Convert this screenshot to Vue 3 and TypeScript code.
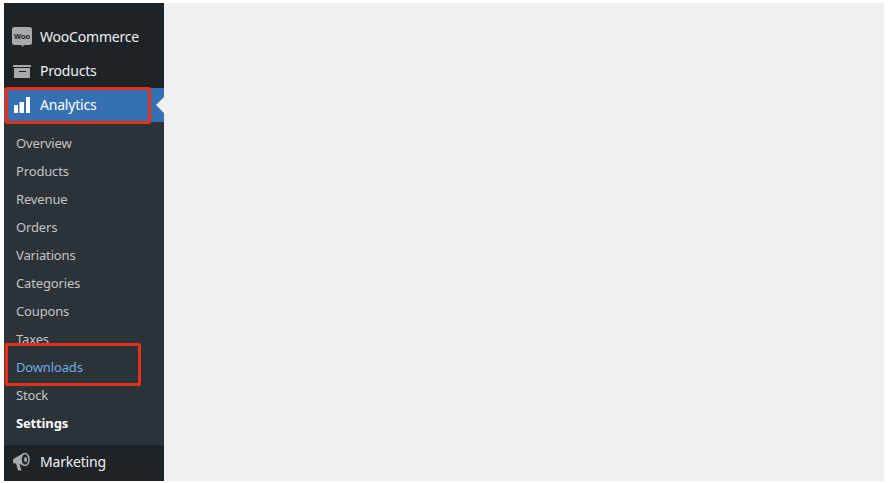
<script setup lang="ts">
const subItems: { label: string; cls?: string }[] = [
  { label: 'Overview' },
  { label: 'Products' },
  { label: 'Revenue' },
  { label: 'Orders' },
  { label: 'Variations' },
  { label: 'Categories' },
  { label: 'Coupons' },
  { label: 'Taxes' },
  { label: 'Downloads', cls: 'current' },
  { label: 'Stock' },
  { label: 'Settings', cls: 'bold' },
]
</script>

<template>
  <div class="page">
    <aside class="sidebar">
      <div class="item">
        <svg class="icon" viewBox="0 0 20 20" width="20" height="20">
          <path fill="#a7aaad" d="M2.500 0h15A2.500 2.500 0 0 1 20 2.500v13a2.500 2.500 0 0 1-2.500 2.500H12l-1.500 2-1-2h-7A2.500 2.500 0 0 1 0 15.500v-13A2.500 2.500 0 0 1 2.500 0z" />
          <text x="10" y="11.500" text-anchor="middle" class="woo">Woo</text>
        </svg>
        <span class="label">WooCommerce</span>
      </div>
      <div class="item">
        <svg class="icon" viewBox="0 0 20 20" width="20" height="20">
          <path fill="#a7aaad" d="M1 4h18v2H1zM2 7h16v10H2z" />
          <rect x="7" y="10" width="7" height="1" fill="#1d2327" />
        </svg>
        <span class="label">Products</span>
      </div>
      <div class="item active">
        <svg class="icon" viewBox="0 0 20 20" width="20" height="20">
          <path fill="#fff" d="M2 10h4v8H2zM7.500 7H12v11H7.500zM14 2h4v16h-4z" />
        </svg>
        <span class="label">Analytics</span>
      </div>
      <ul class="submenu">
        <li v-for="s in subItems" :key="s.label" :class="s.cls">{{ s.label }}</li>
      </ul>
      <div class="item">
        <svg class="icon" viewBox="0 0 20 20" width="20" height="20">
          <path fill="#a7aaad" d="M1 8q0-1 1-1.500L11 1.500v12L7.500 12l2 6.500H6L4 11.500H2.500Q1 11.500 1 10z" />
          <ellipse cx="13" cy="7.500" rx="4" ry="6" fill="#1d2327" stroke="#a7aaad" stroke-width="1.500" />
          <ellipse cx="13.500" cy="7.500" rx="1.500" ry="2.500" fill="#a7aaad" />
        </svg>
        <span class="label">Marketing</span>
      </div>
      <i class="mark mark-analytics"></i>
      <i class="mark mark-downloads"></i>
    </aside>
    <main class="content"></main>
  </div>
</template>

<style>
html,
body {
  margin: 0;
  background: #fff;
}
</style>

<style scoped>
.page {
  display: flex;
  box-sizing: border-box;
  width: 890px;
  height: 483px;
  padding: 3px 6px 2px 4px;
  overflow: hidden;
  font-family: "Noto Sans", "Open Sans", sans-serif;
}
.sidebar {
  position: relative;
  flex: 0 0 160px;
  box-sizing: border-box;
  padding-top: 17px;
  background: #1d2327;
  overflow: hidden;
}
.content {
  flex: 1;
  background: #f0f0f1;
}
.item {
  display: flex;
  align-items: center;
  gap: 8px;
  height: 34px;
  padding-left: 8px;
  font-size: 14px;
  letter-spacing: -0.2px;
  color: #f0f0f1;
}
.label {
  padding-bottom: 2px;
}
.icon {
  flex: none;
}
.woo {
  font-size: 7.500px;
  font-weight: 700;
  letter-spacing: 0;
  fill: #1d2327;
  font-family: "Liberation Sans", sans-serif;
}
.active {
  position: relative;
  background: #3570b3;
  color: #fff;
}
.active::after {
  content: "";
  position: absolute;
  right: 0;
  top: 9px;
  border: 8px solid transparent;
  border-right-color: #f0f0f1;
  border-left-width: 0;
}
.submenu {
  margin: 0;
  padding: 7px 0 8px;
  list-style: none;
  background: #2c3338;
}
.submenu li {
  height: 28px;
  padding-left: 12px;
  font-size: 13px;
  letter-spacing: -0.15px;
  line-height: 28px;
  color: #c3c4c7;
}
.submenu .current {
  color: #72aee6;
}
.submenu .bold {
  font-weight: 700;
  color: #fff;
}
.mark {
  position: absolute;
  box-sizing: border-box;
  border: 3px solid #e5301a;
  border-radius: 2px;
  box-shadow: -1px 0 0 rgba(229, 48, 26, 0.35);
}
.mark-analytics {
  left: 1px;
  top: 84px;
  width: 146px;
  height: 37px;
}
.mark-downloads {
  left: 1px;
  top: 340px;
  width: 136px;
  height: 43px;
}
</style>
